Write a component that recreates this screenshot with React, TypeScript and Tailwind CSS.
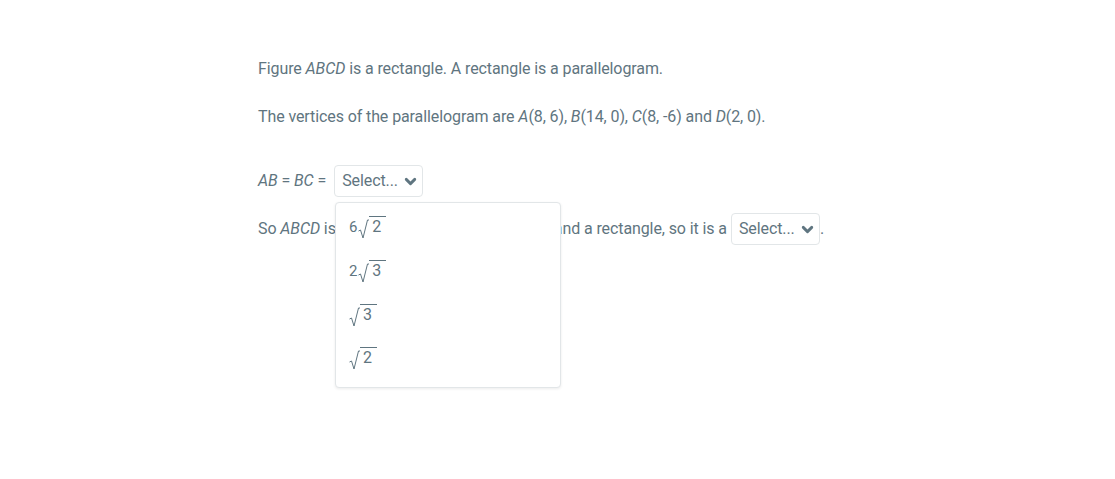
import { ChevronDown } from "lucide-react"

const font = { fontFamily: "Roboto, 'Noto Sans', sans-serif" }

function Select({ className = "" }: { className?: string }) {
  return (
    <div
      className={`inline-flex h-8 w-[89px] items-center justify-between rounded border border-[#e2e6e8] bg-white pl-[7px] pr-[3px] text-[#5f7580] ${className}`}
    >
      <span>Select...</span>
      <ChevronDown size={17} strokeWidth={4} />
    </div>
  )
}

function Radical({ n, coef }: { n: string; coef?: string }) {
  return (
    <span className="inline-flex items-end leading-none">
      {coef && <span className="mr-[1px]">{coef}</span>}
      <svg width="11" height="20" viewBox="0 0 11 20" className="-mb-[4px]">
        <path d="M0.5 12 L2.5 11 L5 19 L9.5 1 L11 1" fill="none" stroke="#5f7580" strokeWidth="1" />
      </svg>
      <span className="border-t border-[#5f7580] pl-[3px] pr-[5px] pt-[2px] text-[16px]">{n}</span>
    </span>
  )
}

const options = [
  { coef: "6", n: "2" },
  { coef: "2", n: "3" },
  { n: "3" },
  { n: "2" },
]

export default function App() {
  return (
    <div className="min-h-screen bg-white text-[16px] leading-6 tracking-[-0.1px] text-[#5f7580]" style={font}>
      <div className="mx-auto w-[599px] pt-[57px]">
        <p>
          Figure <i>ABCD</i> is a rectangle. A rectangle is a parallelogram.
        </p>
        <p className="mt-6">
          The vertices of the parallelogram are <i>A</i>(8, 6), <i>B</i>(14, 0), <i>C</i>(8, -6) and <i>D</i>(2, 0).
        </p>

        <div className="relative mt-[36px] flex items-center">
          <span>
            <i>AB</i> = <i>BC</i> =
          </span>
          <Select className="ml-2" />
          <div className="absolute left-[77px] top-[37px] z-10 w-[226px] rounded border border-[#e2e6e8] bg-white pb-[8px] pt-[1px] text-[15px] shadow-[0_1px_3px_rgba(0,0,0,0.08)]">
            {options.map((o, i) => (
              <div key={i} className="flex h-[43.7px] items-center px-[13px]">
                <Radical coef={o.coef} n={o.n} />
              </div>
            ))}
          </div>
        </div>

        <div className="mt-4 flex items-center whitespace-nowrap">
          <span>
            So <i>ABCD</i> is
          </span>
          <span className="w-[218px] shrink-0" />
          <span>and a rectangle, so it is a</span>
          <Select className="ml-1" />
          <span>.</span>
        </div>
      </div>
    </div>
  )
}
